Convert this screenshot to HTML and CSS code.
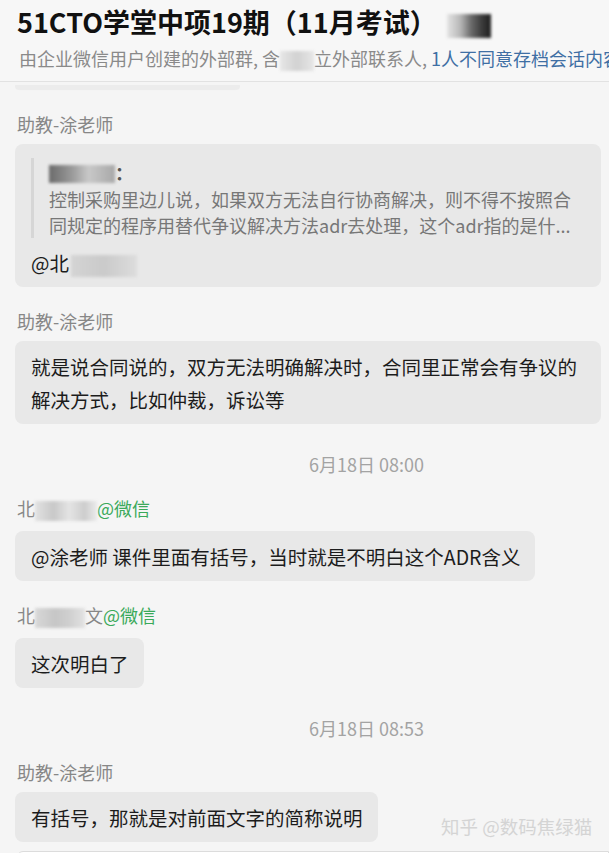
FILE: index.html
```html
<!DOCTYPE html>
<html lang="zh-CN">
<head>
<meta charset="utf-8">
<title>51CTO学堂中项19期（11月考试）</title>
<link rel="stylesheet" href="styles.css">
</head>
<body>
<div class="page">
  <header class="header">
    <div class="title">51CTO学堂中项19期（11月考试）<span class="blur blur-title"></span></div>
    <div class="subtitle">由企业微信用户创建的外部群, 含<span class="blur blur-sub"></span>立外部联系人, <span class="link">1人不同意存档会话内容</span></div>
  </header>
  <div class="prev-tail"></div>
  <main class="chat">
    <section class="msg first">
      <div class="sender">助教-涂老师</div>
      <div class="bubble full">
        <div class="quote">
          <div class="quote-name"><span class="blur blur-qname"></span>：</div>
          <div class="quote-text">控制采购里边儿说，如果双方无法自行协商解决，则不得不按照合</div>
          <div class="quote-text">同规定的程序用替代争议解决方法adr去处理，这个adr指的是什...</div>
        </div>
        <div class="reply">@北<span class="blur blur-at"></span></div>
      </div>
    </section>
    <section class="msg">
      <div class="sender">助教-涂老师</div>
      <div class="bubble full">就是说合同说的，双方无法明确解决时，合同里正常会有争议的解决方式，比如仲裁，诉讼等</div>
    </section>
    <div class="time">6月18日 08:00</div>
    <section class="msg">
      <div class="sender">北<span class="blur blur-name"></span><span class="wx">@微信</span></div>
      <div class="bubble">@涂老师 课件里面有括号，当时就是不明白这个ADR含义</div>
    </section>
    <section class="msg">
      <div class="sender">北<span class="blur blur-name2"></span>文<span class="wx">@微信</span></div>
      <div class="bubble">这次明白了</div>
    </section>
    <div class="time">6月18日 08:53</div>
    <section class="msg">
      <div class="sender">助教-涂老师</div>
      <div class="bubble">有括号，那就是对前面文字的简称说明</div>
    </section>
  </main>
  <div class="composer"></div>
  <div class="watermark">知乎 @数码焦绿猫</div>
</div>
</body>
</html>
```
FILE: styles.css
```css
html, body {
  margin: 0;
  padding: 0;
}
body {
  background: #f5f5f5;
  font-family: "Noto Sans CJK SC", "Microsoft YaHei", sans-serif;
  color: #1a1a1a;
}
.page {
  position: relative;
  width: 609px;
  height: 853px;
  overflow: hidden;
}
.header {
  height: 82px;
  box-sizing: border-box;
  border-bottom: 1px solid #e2e2e2;
  background: #f7f7f7;
  padding: 4px 0 0 17px;
  white-space: nowrap;
  overflow: hidden;
}
.title {
  font-size: 27px;
  font-weight: 700;
  line-height: 36px;
  color: #111;
}
.subtitle {
  margin-top: 4px;
  padding-left: 2px;
  font-size: 18px;
  line-height: 28px;
  color: #8a8a8a;
}
.link {
  color: #3f6fa4;
}
.blur {
  display: inline-block;
  vertical-align: middle;
  filter: blur(1.5px);
}
.blur-title {
  width: 44px;
  height: 24px;
  margin-left: 10px;
  background: linear-gradient(90deg, #e4e4e4 0%, #b8b8b8 30%, #6a6a6a 55%, #3a3a3a 80%, #1e1e1e 100%);
}
.blur-sub {
  width: 34px;
  height: 20px;
  background: linear-gradient(90deg, #e6e6e6, #d2d2d2 50%, #e6e6e6);
}
.blur-qname {
  width: 66px;
  height: 18px;
  margin-top: -3px;
  background: linear-gradient(90deg, #6a6a6a, #9a9a9a 35%, #c8c8c8 60%, #a8a8a8);
}
.blur-at {
  width: 66px;
  height: 22px;
  margin-left: 2px;
  background: linear-gradient(90deg, #d4d4d4, #cacaca 50%, #dcdcdc);
}
.blur-name {
  width: 62px;
  height: 20px;
  background: linear-gradient(90deg, #e2e2e2, #c8c8c8 30%, #e4e4e4 55%, #cdcdcd 80%, #ebebeb);
}
.blur-name2 {
  width: 50px;
  height: 20px;
  background: linear-gradient(90deg, #d8d8d8, #c6c6c6 40%, #d0d0d0 70%, #e2e2e2);
}
.prev-tail {
  width: 225px;
  height: 4px;
  margin: 3px 0 0 15px;
  background: #ececec;
  border-radius: 0 0 8px 8px;
  box-shadow: 0 1px 1px rgba(0, 0, 0, 0.04);
}
.chat {
  padding: 0 8px 0 15px;
}
.msg {
  margin-top: 24px;
}
.msg.first {
  margin-top: 25px;
}
.sender {
  font-size: 18px;
  line-height: 20px;
  color: #878787;
  padding-left: 2px;
  margin-bottom: 10px;
  white-space: nowrap;
}
.wx {
  color: #3aa95a;
}
.bubble {
  width: fit-content;
  box-sizing: border-box;
  background: #e8e8e8;
  border-radius: 8px;
  padding: 8.5px 15px 8.5px 16px;
  font-size: 19.5px;
  line-height: 33px;
  color: #1c1c1c;
}
.bubble.full {
  width: 586px;
}
.msg.first .bubble {
  padding-top: 14px;
  padding-bottom: 8px;
}
.quote {
  border-left: 3px solid #d6d6d6;
  padding-left: 15px;
}
.quote-name {
  font-size: 18px;
  line-height: 28px;
  font-weight: 700;
  color: #555;
}
.quote-text {
  font-size: 18px;
  line-height: 26px;
  color: #777;
  white-space: nowrap;
}
.reply {
  margin-top: 8px;
}
.time {
  margin: 30px 0 3px;
  padding-left: 294px;
  font-size: 18px;
  line-height: 20px;
  color: #a3a3a3;
}
.composer {
  margin: 9px 0 0 17px;
  height: 60px;
  background: #ffffff;
  border: 1px solid #dcdcdc;
  border-radius: 6px 0 0 0;
}
.watermark {
  position: absolute;
  left: 441px;
  top: 814px;
  font-size: 18.5px;
  line-height: 24px;
  color: #d4d4d4;
  white-space: nowrap;
}
```
